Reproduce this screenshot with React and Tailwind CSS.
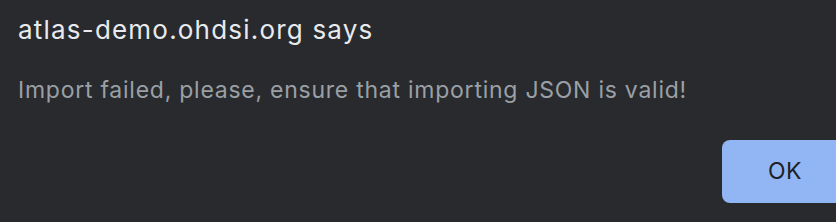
export default function App() {
  return (
    <div className="w-[836px] h-[222px] overflow-hidden bg-[#292a2d] flex flex-col" style={{ fontFamily: "Inter, 'Noto Sans', sans-serif" }}>
      <div className="pl-[18px] pt-[12px] text-[26px] leading-[36px] tracking-[1.2px] text-[#e8eaed]">atlas-demo.ohdsi.org says</div>
      <div className="pl-[18px] pt-[27px] text-[23px] leading-[30px] tracking-[0.75px] text-[#9aa0a6]">Import failed, please, ensure that importing JSON is valid!</div>
      <div className="flex justify-end mt-[35px]">
        <button className="w-[126px] h-[63px] mr-[-12px] rounded-[8px] bg-[#92b6f3] text-[#202124] text-[23px] tracking-[0.5px]">OK</button>
      </div>
    </div>
  );
}
